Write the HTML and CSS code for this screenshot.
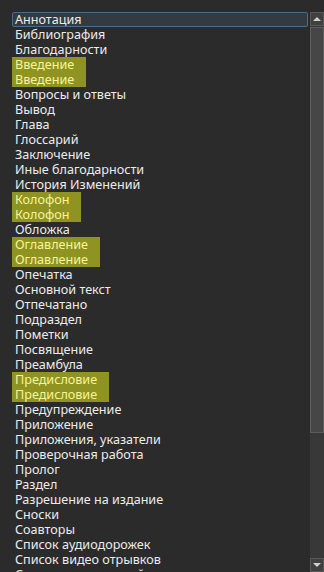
FILE: index.html
```html
<!DOCTYPE html>
<html lang="ru">
<head>
  <meta charset="UTF-8">
  <meta name="viewport" content="width=device-width, initial-scale=1.0">
  <title>Типы разделов</title>
  <link rel="stylesheet" href="styles.css">
</head>
<body>
  <div class="panel">
    <ul class="list">
      <li class="row current">Аннотация</li>
      <li class="row">Библиография</li>
      <li class="row">Благодарности</li>
      <li class="row"><span class="mark">Введение</span></li>
      <li class="row"><span class="mark">Введение</span></li>
      <li class="row">Вопросы и ответы</li>
      <li class="row">Вывод</li>
      <li class="row">Глава</li>
      <li class="row">Глоссарий</li>
      <li class="row">Заключение</li>
      <li class="row">Иные благодарности</li>
      <li class="row">История Изменений</li>
      <li class="row"><span class="mark">Колофон</span></li>
      <li class="row"><span class="mark">Колофон</span></li>
      <li class="row">Обложка</li>
      <li class="row"><span class="mark">Оглавление</span></li>
      <li class="row"><span class="mark">Оглавление</span></li>
      <li class="row">Опечатка</li>
      <li class="row">Основной текст</li>
      <li class="row">Отпечатано</li>
      <li class="row">Подраздел</li>
      <li class="row">Пометки</li>
      <li class="row">Посвящение</li>
      <li class="row">Преамбула</li>
      <li class="row"><span class="mark">Предисловие</span></li>
      <li class="row"><span class="mark">Предисловие</span></li>
      <li class="row">Предупреждение</li>
      <li class="row">Приложение</li>
      <li class="row">Приложения, указатели</li>
      <li class="row">Проверочная работа</li>
      <li class="row">Пролог</li>
      <li class="row">Раздел</li>
      <li class="row">Разрешение на издание</li>
      <li class="row">Сноски</li>
      <li class="row">Соавторы</li>
      <li class="row">Список аудиодорожек</li>
      <li class="row">Список видео отрывков</li>
      <li class="row">Список иллюстраций</li>
    </ul>

    <div class="scrollbar">
      <div class="arrow up"></div>
      <div class="track">
        <div class="thumb"></div>
      </div>
      <div class="arrow down"></div>
    </div>
  </div>
</body>
</html>
```

FILE: styles.css
```css
body {
  margin: 0;
  background: #2b2b2b;
  font-family: "Noto Sans", "Open Sans", sans-serif;
  font-size: 12.6px;
  color: #ececec;
}

.panel {
  display: flex;
  gap: 2px;
  height: 560px;
  padding: 12px 0 0 12px;
}

.list {
  flex: 1;
  margin: 0;
  padding: 0;
  list-style: none;
  overflow: hidden;
}

.row {
  height: 15px;
  line-height: 15px;
  padding-left: 3px;
  white-space: nowrap;
  box-sizing: border-box;
}

.row.current {
  background: #343a41;
  border: 1px solid #4f6b88;
  border-radius: 2px;
  line-height: 13px;
  padding-left: 2px;
}

.mark {
  display: inline-block;
  height: 15px;
  margin-left: -5px;
  padding: 0 12px 0 5px;
  background: #8f9322;
  color: #f6f59a;
}

.scrollbar {
  width: 14px;
  display: flex;
  flex-direction: column;
}

.arrow {
  height: 14px;
  background: #404040;
  border: 1px solid #585858;
  box-sizing: border-box;
  display: flex;
  align-items: center;
  justify-content: center;
}

.arrow::after {
  content: "";
  border-left: 4px solid transparent;
  border-right: 4px solid transparent;
}

.arrow.up::after {
  border-bottom: 4px solid #d0d0d0;
}

.arrow.down::after {
  border-top: 4px solid #d0d0d0;
}

.track {
  flex: 1;
  background: #383838;
  padding: 1px 0;
}

.thumb {
  height: 406px;
  background: #464646;
  border: 1px solid #5c5c5c;
  box-sizing: border-box;
}
```
